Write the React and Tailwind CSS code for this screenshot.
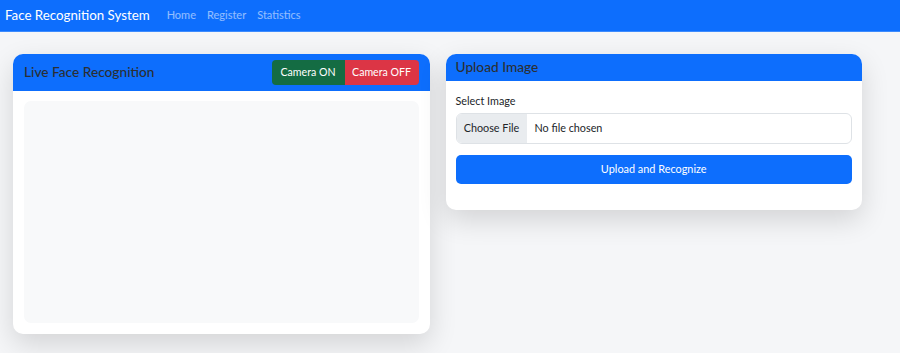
export default function App() {
  return (
    <div
      className="min-h-[353px] bg-[#f5f6f8] text-[#212529]"
      style={{ fontFamily: '"Segoe UI", "Lato", sans-serif' }}
    >
      <nav className="h-[32px] bg-[#0d6efd] flex items-center px-[5px] border-b border-[#3d8bfd]">
        <span className="text-white text-[13.3px] mr-[17px] whitespace-nowrap">Face Recognition System</span>
        <div className="flex gap-[11px] text-[11px] text-white/55">
          <span>Home</span>
          <span>Register</span>
          <span>Statistics</span>
        </div>
      </nav>

      <main className="ml-[13px] w-[849px] pt-[22px] grid grid-cols-2 gap-4 items-start">
        <section className="bg-white rounded-[10px] overflow-hidden shadow-[0_10px_28px_rgba(0,0,0,0.14)]">
          <header className="h-[37px] bg-[#0d6efd] flex items-center justify-between pl-[11px] pr-[11px]">
            <h2 className="text-[13.7px] font-medium text-[#2b2f33]">Live Face Recognition</h2>
            <div className="flex text-[10.6px] text-white">
              <button className="h-[25px] w-[73px] bg-[#146c43] rounded-l-[4px]">Camera ON</button>
              <button className="h-[25px] w-[74px] bg-[#dc3545] rounded-r-[4px]">Camera OFF</button>
            </div>
          </header>
          <div className="p-[11px] pt-[10px]">
            <div className="h-[222px] bg-[#f8f9fa] rounded-[7px]" />
          </div>
        </section>

        <section className="bg-white rounded-[10px] overflow-hidden shadow-[0_10px_28px_rgba(0,0,0,0.14)]">
          <header className="h-[27px] bg-[#0d6efd] flex items-center px-[10px]">
            <h2 className="text-[13.7px] font-medium text-[#2b2f33]">Upload Image</h2>
          </header>
          <div className="px-[10px] pt-[12px] pb-[26px]">
            <label className="block text-[10.8px] leading-[16px] mb-[4px]">Select Image</label>
            <div className="h-[31px] border border-[#dee2e6] rounded-[6px] flex items-center overflow-hidden text-[10.8px]">
              <span className="h-full bg-[#e9ecef] flex items-center justify-center w-[70px] whitespace-nowrap">
                Choose File
              </span>
              <span className="ml-[8px]">No file chosen</span>
            </div>
            <button className="mt-[11px] w-full h-[29px] bg-[#0d6efd] rounded-[5px] text-white text-[10.9px]">
              Upload and Recognize
            </button>
          </div>
        </section>
      </main>
    </div>
  );
}
